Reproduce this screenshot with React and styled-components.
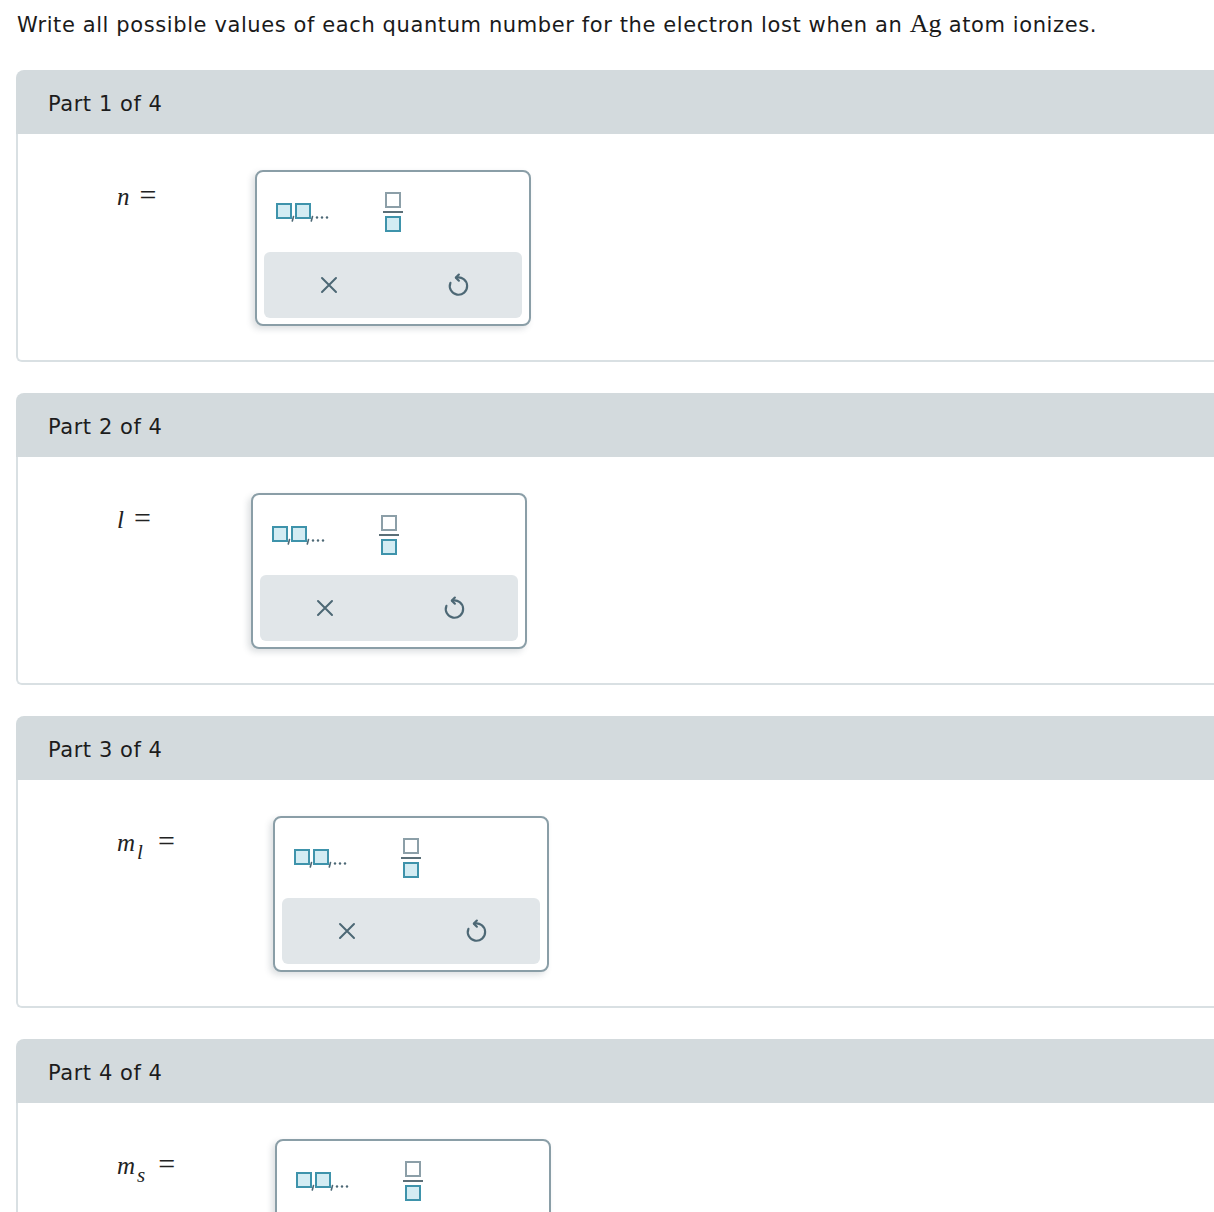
import React from 'react';
import styled, { createGlobalStyle } from 'styled-components';

const GlobalStyle = createGlobalStyle`
  html, body {
    margin: 0;
    padding: 0;
    overflow: hidden;
    background: #fff;
  }
  body {
    font-family: "DejaVu Sans", Verdana, sans-serif;
    color: #1a1a1a;
  }
`;

const Page = styled.div`
  padding: 9px 16px 0 16px;
`;

const Question = styled.p`
  margin: 0 0 30px 0;
  padding-left: 1px;
  font-size: 21px;
  letter-spacing: 0.6px;
  line-height: 29px;
`;

const Chem = styled.span`
  font-family: "Liberation Serif", "Times New Roman", serif;
  font-size: 26px;
  letter-spacing: 0;
`;

const Card = styled.section`
  width: calc(100% + 40px);
  margin-bottom: 31px;
`;

const CardHeader = styled.div`
  height: 64px;
  box-sizing: border-box;
  display: flex;
  align-items: center;
  padding: 4px 0 0 32px;
  background: #d3dadd;
  border-radius: 8px 0 0 0;
  font-size: 21px;
  letter-spacing: 0.55px;
  color: #1c1c1c;
`;

const CardBody = styled.div`
  display: flex;
  align-items: flex-start;
  padding: 36px 0 34px 99px;
  border-left: 2px solid #d9e0e3;
  border-bottom: 2px solid #d9e0e3;
  border-radius: 0 0 0 6px;
`;

const Label = styled.div`
  flex-shrink: 0;
  width: ${p => p.$w}px;
  margin-right: 99px;
  padding-top: 10px;
  font-family: "Liberation Serif", "Times New Roman", serif;
  font-size: 25px;
  color: #222;
  white-space: nowrap;
  display: flex;
  align-items: baseline;
`;

const Var = styled.i`
  font-style: italic;
`;

const Sub = styled.i`
  font-style: italic;
  font-size: 21px;
  position: relative;
  top: 8px;
  margin-left: 2px;
`;

const Eq = styled.span`
  margin-left: ${p => p.$gap}px;
  font-size: 30px;
  line-height: 1;
`;

const Widget = styled.div`
  flex-shrink: 0;
  width: 276px;
  height: 156px;
  box-sizing: border-box;
  border: 2px solid #8a9ea7;
  border-radius: 8px;
  background: #fff;
  box-shadow: -3px 3px 6px rgba(60, 80, 90, 0.18);
  padding: 0 7px 6px 7px;
  display: flex;
  flex-direction: column;
`;

const Palette = styled.div`
  height: 80px;
  display: grid;
  grid-template-columns: repeat(3, 88px);
  align-items: center;
  margin-left: -3px;
`;

const PaletteCell = styled.div`
  display: flex;
  justify-content: center;
  align-items: center;
`;

const Actions = styled.div`
  flex: 1;
  display: grid;
  grid-template-columns: 1fr 1fr;
  background: #e1e6e9;
  border-radius: 6px;
`;

const ActionButton = styled.div`
  display: flex;
  align-items: center;
  justify-content: center;
`;

const teal = '#3e93ab';
const tealFill = '#d3ecf3';
const ink = '#4d6875';

function ListIcon() {
  return (
    <svg width="58" height="22" viewBox="0 0 58 22">
      <rect x="1" y="3" width="14" height="14" fill={tealFill} stroke={teal} strokeWidth="2" />
      <path d="M17.5 15.5 L16.3 20" stroke={ink} strokeWidth="1.6" strokeLinecap="round" />
      <rect x="20" y="3" width="14" height="14" fill={tealFill} stroke={teal} strokeWidth="2" />
      <path d="M36.5 15.5 L35.3 20" stroke={ink} strokeWidth="1.6" strokeLinecap="round" />
      <circle cx="41" cy="16.5" r="1.2" fill={ink} />
      <circle cx="46" cy="16.5" r="1.2" fill={ink} />
      <circle cx="51" cy="16.5" r="1.2" fill={ink} />
    </svg>
  );
}

function FractionIcon() {
  return (
    <svg width="24" height="42" viewBox="0 0 24 42">
      <rect x="5" y="2" width="14" height="14" fill="#fff" stroke="#8c9fa8" strokeWidth="2" />
      <rect x="2" y="20" width="20" height="2" fill="#5b6f78" />
      <rect x="5" y="26" width="14" height="14" fill={tealFill} stroke={teal} strokeWidth="2" />
    </svg>
  );
}

function ClearIcon() {
  return (
    <svg width="20" height="20" viewBox="0 0 20 20">
      <path d="M3 3 L17 17 M17 3 L3 17" stroke={ink} strokeWidth="2" strokeLinecap="round" />
    </svg>
  );
}

function UndoIcon() {
  return (
    <svg width="26" height="26" viewBox="0 0 24 24" fill="none">
      <path d="M10.5 5.2 A8 8 0 1 1 5 10" stroke={ink} strokeWidth="2" strokeLinecap="round" />
      <path d="M12.8 2.4 L10 5.2 L12.8 8" stroke={ink} strokeWidth="2" strokeLinecap="round" strokeLinejoin="round" />
    </svg>
  );
}

function AnswerWidget() {
  return (
    <Widget>
      <Palette>
        <PaletteCell><ListIcon /></PaletteCell>
        <PaletteCell><FractionIcon /></PaletteCell>
      </Palette>
      <Actions>
        <ActionButton><ClearIcon /></ActionButton>
        <ActionButton><UndoIcon /></ActionButton>
      </Actions>
    </Widget>
  );
}

const parts = [
  { n: 1, label: <><Var>n</Var><Eq $gap={10}>=</Eq></>, w: 39 },
  { n: 2, label: <><Var>l</Var><Eq $gap={10}>=</Eq></>, w: 35 },
  { n: 3, label: <><Var>m</Var><Sub>l</Sub><Eq $gap={15}>=</Eq></>, w: 57 },
  { n: 4, label: <><Var>m</Var><Sub>s</Sub><Eq $gap={13}>=</Eq></>, w: 59 },
];

export default function App() {
  return (
    <>
      <GlobalStyle />
      <Page>
        <Question>
          Write all possible values of each quantum number for the electron lost when an <Chem>Ag</Chem> atom ionizes.
        </Question>
        {parts.map(p => (
          <Card key={p.n}>
            <CardHeader>Part {p.n} of 4</CardHeader>
            <CardBody>
              <Label $w={p.w}>{p.label}</Label>
              <AnswerWidget />
            </CardBody>
          </Card>
        ))}
      </Page>
    </>
  );
}
